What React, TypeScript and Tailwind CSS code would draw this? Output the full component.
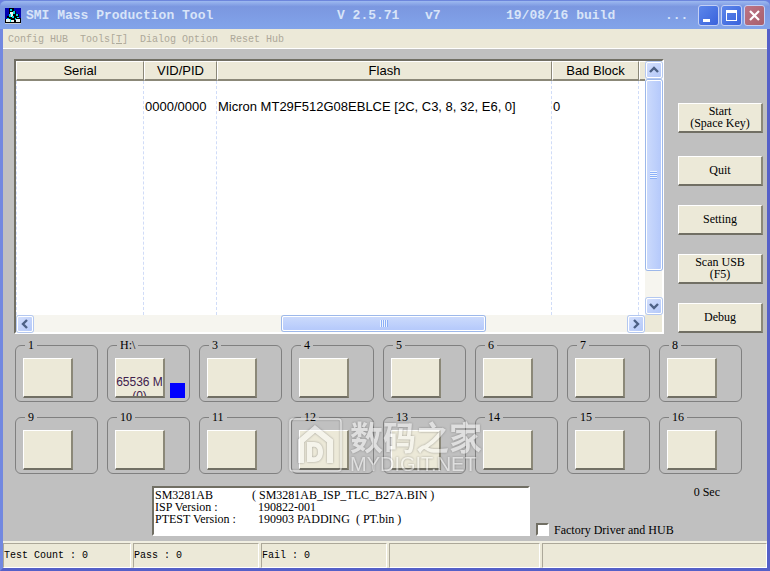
import type { ReactNode } from 'react'

const bevel =
    'border-t border-l border-white border-r-2 border-b-2 border-r-[#8b8878] border-b-[#716f64] bg-[#ece9d8]'

const serif = "font-['Liberation_Serif','Noto_Sans_CJK_SC',serif]"
const mono = "font-['Liberation_Mono','Noto_Sans_CJK_SC',monospace]"
const sans = "font-['Liberation_Sans','Noto_Sans_CJK_SC',sans-serif]"

const menus = ['Config HUB', 'Tools[T]', 'Dialog Option', 'Reset Hub']

const ports = ['1', 'H:\\', '3', '4', '5', '6', '7', '8', '9', '10', '11', '12', '13', '14', '15', '16']

const columns = [
    { label: 'Serial', value: '' },
    { label: 'VID/PID', value: '0000/0000' },
    { label: 'Flash', value: 'Micron MT29F512G08EBLCE [2C, C3, 8, 32, E6, 0]' },
    { label: 'Bad Block', value: '0' },
    { label: '', value: '' },
]

function AppIcon() {
    return (
        <svg width="16" height="16" viewBox="0 0 16 16" shapeRendering="crispEdges" aria-hidden="true">
            <rect width="16" height="16" fill="#0000b0" />
            <path d="M4 0h5v3h2v3h3v4h2v6H0v-5h2V8h2z" fill="#000" />
            <path d="M5 4h3v5H5zM1 11h4v3H1zM11 11h4v3h-4zM6 12h3v2H6z" fill="#e8f4f4" />
            <path d="M5 1h2v2H5zM8 3h2v3H8zM4 6h2v3H4zM7 8h2v2H7zM11 6h2v2h-2zM2 10h2v1H2zM5 11h1v3H5zM10 10h1v2h-1zM12 9h2v1h-2z" fill="#00d8d8" />
            <path d="M0 15h16v1H0z" fill="#c8d0d8" />
        </svg>
    )
}

function TitleButton({ label, className, children }: { label: string; className: string; children: ReactNode }) {
    return (
        <button
            type="button"
            aria-label={label}
            className={`flex size-[21px] items-center justify-center rounded-[3px] border border-[#c3d0f5] ${className}`}
        >
            <svg width="15" height="15" viewBox="0 0 15 15" aria-hidden="true">
                {children}
            </svg>
        </button>
    )
}

function TitleBar() {
    return (
        <header className="flex h-[29px] items-center rounded-t-md border-t border-[#6d86dc] bg-linear-to-b from-[#9db9f0] via-[#7b97e0] via-20% to-[#82a4ea] px-[5px] pt-px">
            <AppIcon />
            <h1 className={`${mono} flex flex-1 items-center pl-[5px] text-[13px] font-bold whitespace-pre text-[#d8e4f8]`}>
                <span className="w-[311px]">SMI Mass Production Tool</span>
                <span className="w-[88px]">V 2.5.71</span>
                <span className="w-[81px]">v7</span>
                <span className="w-[159px]">19/08/16 build</span>
                <span>...</span>
            </h1>
            <div className="flex gap-[2px]">
                <TitleButton label="Minimize" className="bg-linear-to-br from-[#5c86ea] to-[#3a62dc]">
                    <path d="M2 11h7v3H2z" fill="#fff" />
                </TitleButton>
                <TitleButton label="Maximize" className="bg-linear-to-br from-[#5c86ea] to-[#3a62dc]">
                    <path d="M2 2h11v11H2zM3 5v7h9V5z" fill="#fff" fillRule="evenodd" />
                </TitleButton>
                <TitleButton label="Close" className="bg-linear-to-br from-[#bd7486] to-[#a8606c]">
                    <path d="M3 3l9 9M12 3l-9 9" stroke="#fff" strokeWidth="2.2" />
                </TitleButton>
            </div>
        </header>
    )
}

function ScrollArrow({ label, d }: { label: string; d: string }) {
    return (
        <button
            type="button"
            aria-label={label}
            className="flex size-4 shrink-0 items-center justify-center rounded-[2px] border border-white bg-linear-to-br from-[#d3dffc] to-[#b4c8f8] shadow-[0_0_0_1px_#b4c8f0]"
        >
            <svg width="10" height="10" viewBox="0 0 10 10" aria-hidden="true">
                <path d={d} fill="none" stroke="#4d6185" strokeWidth="2.4" />
            </svg>
        </button>
    )
}

function FlashList() {
    return (
        <section
            className={`${sans} grid flex-1 grid-cols-[1fr_17px] grid-rows-[254px_17px] border-2 border-t-[#716f64] border-r-white border-b-white border-l-[#716f64] bg-white`}
        >
            <table className="h-full w-full table-fixed border-separate border-spacing-0 text-[13px] text-black">
                <colgroup>
                    <col className="w-[128px]" />
                    <col className="w-[73px]" />
                    <col />
                    <col className="w-[87px]" />
                    <col className="w-[6px]" />
                </colgroup>
                <thead>
                    <tr className="h-5">
                        {columns.map((c) => (
                            <th
                                key={c.label}
                                className="border-t border-r border-b-2 border-l border-t-white border-r-[#8b8878] border-b-[#8b8878] border-l-white bg-[#ece9d8] p-0 pt-px leading-4 font-normal last:border-r-0"
                            >
                                {c.label}
                            </th>
                        ))}
                    </tr>
                </thead>
                <tbody>
                    <tr>
                        {columns.map((c) => (
                            <td
                                key={c.label}
                                className="border-r border-dashed border-[#d0dcf8] p-0 pt-[18px] pl-px align-top leading-4 whitespace-nowrap first:border-l last:border-r-0"
                            >
                                {c.value}
                            </td>
                        ))}
                    </tr>
                </tbody>
            </table>
            <div className="flex flex-col items-center gap-0.5 bg-[#f6f5ef] py-px">
                <ScrollArrow label="Scroll up" d="M1 7l4-4 4 4" />
                <div className="flex h-[190px] w-4 items-center justify-center rounded-[2px] border border-white bg-linear-to-r from-[#cbdafc] to-[#b5c9fb] shadow-[0_0_0_1px_#9db8ea]">
                    <div className="h-2 w-[7px] bg-[repeating-linear-gradient(to_bottom,#eef4fe_0_1px,#8cb0f8_1px_2px)]" />
                </div>
                <div className="flex-1" />
                <ScrollArrow label="Scroll down" d="M1 3l4 4 4-4" />
            </div>
            <div className="flex items-center bg-[#f6f5ef] px-px">
                <ScrollArrow label="Scroll left" d="M7 1L3 5l4 4" />
                <div className="flex-[250]" />
                <div className="flex h-[15px] w-[203px] items-center justify-center rounded-[2px] border border-white bg-linear-to-b from-[#cbdafc] to-[#b5c9fb] shadow-[0_0_0_1px_#9db8ea]">
                    <div className="h-[7px] w-2 bg-[repeating-linear-gradient(to_right,#eef4fe_0_1px,#8cb0f8_1px_2px)]" />
                </div>
                <div className="flex-[143]" />
                <ScrollArrow label="Scroll right" d="M3 1l4 4-4 4" />
            </div>
            <div className="bg-[#ece9d8]" />
        </section>
    )
}

function CommandButton({ children }: { children: ReactNode }) {
    return (
        <button
            type="button"
            className={`${bevel} flex h-[30px] w-full items-center justify-center pb-px text-center text-[12px] leading-3 text-black`}
        >
            <span>{children}</span>
        </button>
    )
}

function Port({ name }: { name: string }) {
    const active = name === 'H:\\'
    return (
        <fieldset className="h-[63px] min-w-0 rounded-md border border-[#808080] pl-[7px] text-[12px] leading-3 text-black">
            <legend className="ml-0.5 px-[3px]">{name}</legend>
            <div className="flex items-end gap-[5px] pt-[7px]">
                <button
                    type="button"
                    aria-label={`Port ${name}`}
                    className={`${bevel} ${sans} h-10 w-[50px] shrink-0 overflow-hidden text-[12px] leading-[14px] whitespace-nowrap text-[#40204c]`}
                >
                    {active && (
                        <span className="block pt-4">
                            65536 M
                            <br />
                            (0)
                        </span>
                    )}
                </button>
                {active && <span className="size-[15px] bg-[#0000ff]" />}
            </div>
        </fieldset>
    )
}

function Watermark() {
    return (
        <div className="pointer-events-none absolute top-[84px] left-[286px] flex items-start gap-2 text-white opacity-50 drop-shadow-[0_0_1px_#555]">
            <svg width="53" height="54" viewBox="0 0 53 54" fill="none" stroke="currentColor" aria-hidden="true">
                <rect x="1" y="1" width="51" height="52" rx="3" strokeWidth="1.5" />
                <path d="M12 45V23L26 11l15 12v22" strokeWidth="6" />
                <path d="M18 24h7c6 0 9 4 9 10s-3 10-9 10h-7zM23 29v10c4 1 6-1 6-5s-2-6-6-5z" fill="currentColor" fillRule="evenodd" stroke="none" />
            </svg>
            <div>
                <div className="font-['Noto_Sans_CJK_SC',sans-serif] text-[33px] leading-9 font-bold">数码之家</div>
                <div className={`${sans} text-[20px] leading-5`}>MYDIGIT.NET</div>
            </div>
        </div>
    )
}

function StatusBar() {
    const panes = ['Test Count : 0', 'Pass : 0', 'Fail : 0', '', '']
    return (
        <footer
            className={`${mono} grid h-[27px] grid-cols-[128fr_126fr_126fr_151fr_225fr] gap-0.5 border-t-2 border-[#f1efe2] bg-[#ece9d8] text-[10px] text-black`}
        >
            {panes.map((text, i) => (
                <div
                    key={i}
                    className="flex items-center border border-t-[#aca899] border-r-white border-b-white border-l-[#aca899] whitespace-pre"
                >
                    {text}
                </div>
            ))}
        </footer>
    )
}

export default function App() {
    return (
        <div className="bg-[#6a7fe0]">
            <TitleBar />
            <div className="border-r-[3px] border-b-[3px] border-l-[3px] border-r-[#5560c8] border-b-[#5560c8] border-l-[#7288e0] bg-[#c0c0c0]">
                <nav className={`${mono} flex h-5 gap-3 border-b border-white bg-[#ece9d8] pt-px pl-[5px] text-[10px] text-[#aca899]`}>
                    {menus.map((m) => (
                        <button key={m} type="button">
                            {m === 'Tools[T]' ? (
                                <>
                                    Tools[<u>T</u>]
                                </>
                            ) : (
                                m
                            )}
                        </button>
                    ))}
                </nav>

                <main className={serif}>
                    <div className="flex gap-[14px] pt-[10px] pr-1 pl-[11px]">
                        <FlashList />
                        <div className="flex w-[85px] flex-col gap-[23px] pt-11">
                            <CommandButton>
                                Start
                                <br />
                                (Space Key)
                            </CommandButton>
                            <div className="flex flex-col gap-[19px]">
                                <CommandButton>Quit</CommandButton>
                                <CommandButton>Setting</CommandButton>
                                <CommandButton>
                                    Scan USB
                                    <br />
                                    (F5)
                                </CommandButton>
                                <CommandButton>Debug</CommandButton>
                            </div>
                        </div>
                    </div>

                    <div className="relative pt-[5px] pr-[25px] pl-3">
                        <div className="grid grid-cols-8 gap-[9px]">
                            {ports.map((name) => (
                                <Port key={name} name={name} />
                            ))}
                        </div>
                        <Watermark />
                    </div>

                    <div className="flex pt-3 pb-[5px] pl-[149px] text-[12px] leading-3 text-black">
                        <div className="grid h-[50px] flex-1 grid-cols-[97px_1fr] content-start border-2 border-t-[#716f64] border-r-white border-b-white border-l-[#716f64] bg-white pt-px pl-px whitespace-pre">
                            <span>SM3281AB</span>
                            <span>( SM3281AB_ISP_TLC_B27A.BIN )</span>
                            <span>ISP Version :</span>
                            <span className="pl-[6px]">190822-001</span>
                            <span>PTEST Version :</span>
                            <span className="pl-[6px]">190903 PADDING  ( PT.bin )</span>
                        </div>
                        <div className="flex w-[237px] flex-col justify-between pl-[6px]">
                            <span className="pr-[47px] text-right">0 Sec</span>
                            <label className="flex items-center gap-[5px]">
                                <input
                                    type="checkbox"
                                    className="size-[13px] appearance-none border-2 border-t-[#716f64] border-r-white border-b-white border-l-[#716f64] bg-white"
                                />
                                Factory Driver and HUB
                            </label>
                        </div>
                    </div>
                </main>
                <StatusBar />
            </div>
        </div>
    )
}
